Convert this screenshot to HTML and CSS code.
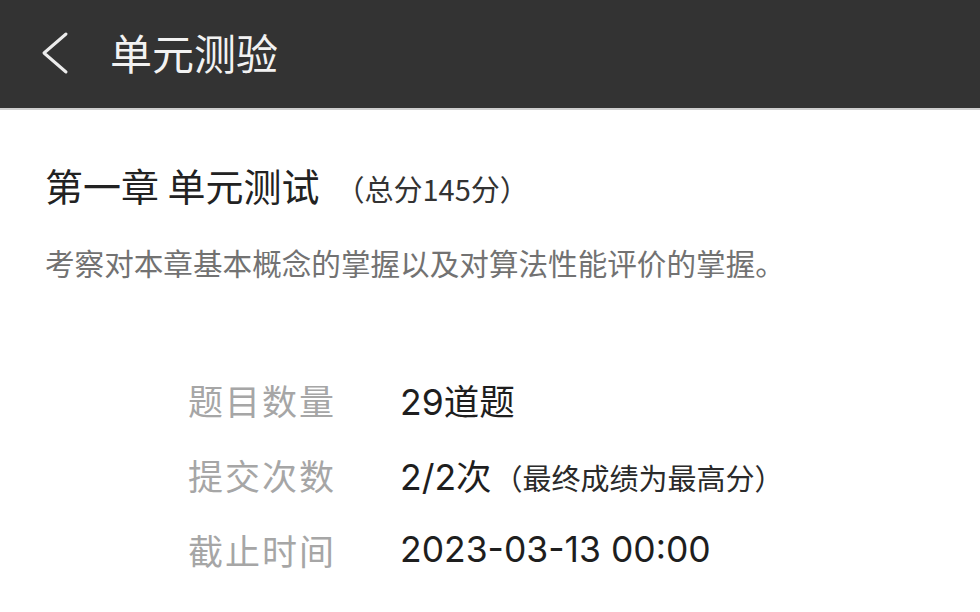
FILE: index.html
```html
<!DOCTYPE html>
<html lang="zh-CN">
<head>
<meta charset="utf-8">
<title>单元测验</title>
<link rel="stylesheet" href="styles.css">
</head>
<body>
<header class="topbar">
  <span class="back" aria-label="返回">
    <svg width="30" height="44" viewBox="0 0 30 44"><polyline points="26,3 4,22 26,41" fill="none" stroke="#ececec" stroke-width="3" stroke-linecap="round" stroke-linejoin="round"/></svg>
  </span>
  <h1 class="title">单元测验</h1>
</header>
<main class="content">
  <h2 class="sec-title">第一章 单元测试<span class="score">（总分145分）</span></h2>
  <p class="desc">考察对本章基本概念的掌握以及对算法性能评价的掌握。</p>
  <dl class="info">
    <div class="row"><dt>题目数量</dt><dd>29道题</dd></div>
    <div class="row"><dt>提交次数</dt><dd>2/2次<span class="note">（最终成绩为最高分）</span></dd></div>
    <div class="row"><dt>截止时间</dt><dd>2023-03-13 00:00</dd></div>
  </dl>
</main>
</body>
</html>
```
FILE: styles.css
```css
html, body {
  margin: 0;
  padding: 0;
  background: #ffffff;
  font-family: "Roboto", "Noto Sans CJK SC", sans-serif;
}
.topbar {
  height: 108px;
  background: #333333;
  border-bottom: 2px solid #cfcfcf;
  display: flex;
  align-items: center;
  padding-left: 40px;
  box-sizing: content-box;
}
.back {
  display: flex;
  width: 30px;
  height: 44px;
  margin-top: -2px;
}
.title {
  margin: -4px 0 0 40px;
  font-family: "Noto Sans CJK SC", sans-serif;
  font-weight: 400;
  font-size: 42px;
  line-height: 50px;
  color: #f2f2f2;
}
.content {
  padding: 0 0 0 45px;
}
.sec-title {
  margin: 50px 0 0 0;
  font-family: "Noto Sans CJK SC", sans-serif;
  font-weight: 400;
  font-size: 38px;
  line-height: 50px;
  color: #222222;
}
.score {
  font-size: 29px;
  margin-left: 16px;
  color: #333333;
}
.desc {
  margin: 30px 0 0 0;
  font-family: "Noto Sans CJK SC", sans-serif;
  font-size: 29.6px;
  line-height: 40px;
  color: #727272;
}
.info {
  margin: 79px 0 0 143px;
  padding: 0;
}
.row {
  display: grid;
  grid-template-columns: 212px auto;
  height: 75px;
  align-items: center;
}
.row dt {
  font-family: "Noto Sans CJK SC", sans-serif;
  font-size: 35px;
  letter-spacing: 2px;
  color: #a6a6a6;
}
.row dd {
  margin: 0;
  font-family: "Inter", "Noto Sans CJK SC", sans-serif;
  font-size: 35.5px;
  color: #1e1e1e;
}
.note {
  font-family: "Noto Sans CJK SC", sans-serif;
  font-size: 29px;
  color: #2a2a2a;
  margin-left: 2px;
}
```
